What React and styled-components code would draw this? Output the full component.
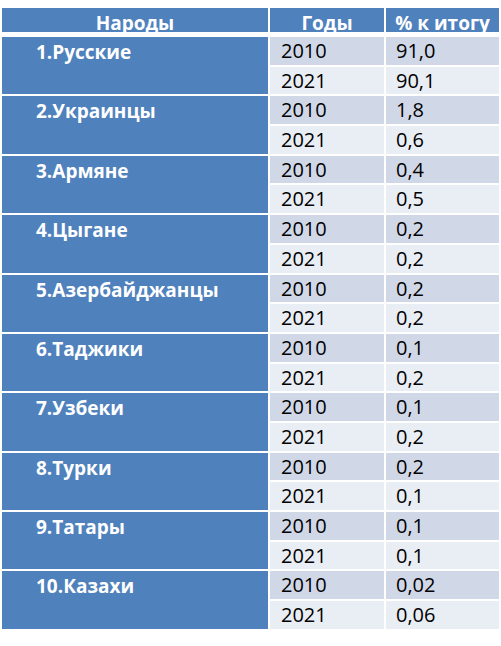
import React from "react";
import styled, { createGlobalStyle } from "styled-components";

const GlobalStyle = createGlobalStyle`
  html, body {
    margin: 0;
    padding: 0;
    background: #ffffff;
  }
  body {
    font-family: "Open Sans", "Liberation Sans", sans-serif;
  }
`;

const rows = [
  { name: "1.Русские", a: "91,0", b: "90,1" },
  { name: "2.Украинцы", a: "1,8", b: "0,6" },
  { name: "3.Армяне", a: "0,4", b: "0,5" },
  { name: "4.Цыгане", a: "0,2", b: "0,2" },
  { name: "5.Азербайджанцы", a: "0,2", b: "0,2" },
  { name: "6.Таджики", a: "0,1", b: "0,2" },
  { name: "7.Узбеки", a: "0,1", b: "0,2" },
  { name: "8.Турки", a: "0,2", b: "0,1" },
  { name: "9.Татары", a: "0,1", b: "0,1" },
  { name: "10.Казахи", a: "0,02", b: "0,06" },
];

const Page = styled.div`
  padding: 8px 0 0 2px;
`;

const Table = styled.div`
  display: grid;
  grid-template-columns: 266px 114px 113px;
  grid-template-rows: 27px repeat(20, 27.7px);
  column-gap: 2px;
  row-gap: 2px;
`;

const HeadCell = styled.div`
  align-self: start;
  box-sizing: border-box;
  height: 24px;
  padding-top: 3px;
  background: #4f81bd;
  color: #ffffff;
  font-weight: 700;
  font-size: 19px;
  line-height: 24px;
  text-align: center;
  white-space: nowrap;
`;

const NameCell = styled.div`
  grid-row: span 2;
  background: #4f81bd;
  color: #ffffff;
  font-weight: 700;
  font-size: 19px;
  line-height: 24px;
  padding: 3px 0 0 34px;
  white-space: nowrap;
`;

const DataCell = styled.div`
  background: ${(p) => (p.$band ? "#d0d8e8" : "#e9edf4")};
  color: #000000;
  font-size: 20px;
  line-height: 24px;
  padding: 2px 0 0 ${(p) => (p.$wide ? "11px" : "10px")};
  white-space: nowrap;
`;

export default function App() {
  return (
    <Page>
      <GlobalStyle />
      <Table>
        <HeadCell>Народы</HeadCell>
        <HeadCell>Годы</HeadCell>
        <HeadCell>% к итогу</HeadCell>
        {rows.map((r) => (
          <React.Fragment key={r.name}>
            <NameCell>{r.name}</NameCell>
            <DataCell $band $wide>2010</DataCell>
            <DataCell $band>{r.a}</DataCell>
            <DataCell $wide>2021</DataCell>
            <DataCell>{r.b}</DataCell>
          </React.Fragment>
        ))}
      </Table>
    </Page>
  );
}
